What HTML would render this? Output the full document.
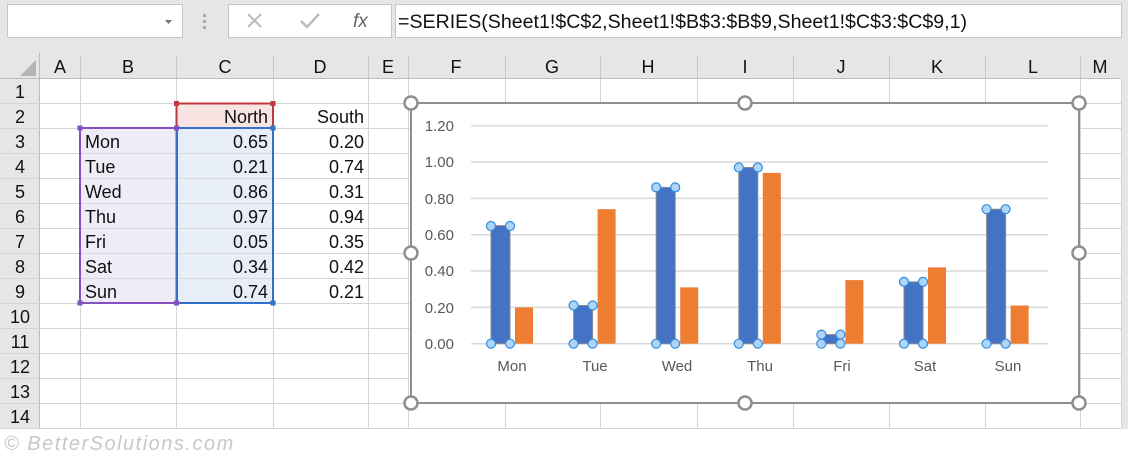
<!DOCTYPE html>
<html><head><meta charset="utf-8"><style>
html,body{margin:0;padding:0;background:#fff}
svg{display:block}
text{font-family:"Liberation Sans",sans-serif}
</style></head><body>
<svg width="1128" height="464" viewBox="0 0 1128 464" xmlns="http://www.w3.org/2000/svg">
<rect x="0" y="0" width="1128" height="79" fill="#e6e6e6"/>
<rect x="7.5" y="4.5" width="175" height="33" fill="#fff" stroke="#c6c6c6"/>
<path d="M165 20 h7 l-3.5 4z" fill="#777"/>
<rect x="203" y="14" width="3" height="3" fill="#aaa"/><rect x="203" y="20" width="3" height="3" fill="#aaa"/><rect x="203" y="26" width="3" height="3" fill="#aaa"/>
<rect x="228.5" y="4.5" width="163" height="33" fill="#fff" stroke="#c6c6c6"/>
<path d="M248 14 l13 13 M261 14 l-13 13" stroke="#bbb" stroke-width="2"/>
<path d="M301 21 l6 6 l12 -13" stroke="#bbb" stroke-width="2.5" fill="none"/>
<text x="353" y="27" font-family="Liberation Serif" font-style="italic" font-size="19" fill="#666">fx</text>
<rect x="395.5" y="4.5" width="726" height="33" fill="#fff" stroke="#c6c6c6"/>
<text x="398" y="28" font-size="19" fill="#111" textLength="569" lengthAdjust="spacingAndGlyphs">=SERIES(Sheet1!$C$2,Sheet1!$B$3:$B$9,Sheet1!$C$3:$C$9,1)</text>
<rect x="40" y="79" width="1081" height="350" fill="#fff"/>
<rect x="1121" y="53" width="7" height="376" fill="#e6e6e6"/>
<rect x="0" y="53" width="1121" height="26" fill="#e6e6e6"/>
<rect x="0" y="79" width="40" height="350" fill="#e6e6e6"/>
<line x1="0" y1="78.5" x2="1121" y2="78.5" stroke="#bdbdbd"/>
<line x1="39.5" y1="53" x2="39.5" y2="429" stroke="#bdbdbd"/>
<path d="M20 76 L36 76 L36 60z" fill="#b5b5b5"/>
<g stroke="#d4d4d4" stroke-width="1">
<path d="M0 103.5H1121M0 128.5H1121M0 153.5H1121M0 178.5H1121M0 203.5H1121M0 228.5H1121M0 253.5H1121M0 278.5H1121M0 303.5H1121M0 328.5H1121M0 353.5H1121M0 378.5H1121M0 403.5H1121M0 428.5H1121"/>
<path d="M80.5 79V429M176.5 79V429M273.5 79V429M368.5 79V429M408.5 79V429M505.5 79V429M600.5 79V429M697.5 79V429M793.5 79V429M889.5 79V429M985.5 79V429M1080.5 79V429M1121.5 79V429"/>
</g>
<g stroke="#c8c8c8"><path d="M80.5 56V79M176.5 56V79M273.5 56V79M368.5 56V79M408.5 56V79M505.5 56V79M600.5 56V79M697.5 56V79M793.5 56V79M889.5 56V79M985.5 56V79M1080.5 56V79"/></g>
<g font-size="18" fill="#111" text-anchor="middle">
<text x="60" y="73">A</text><text x="128" y="73">B</text><text x="225" y="73">C</text><text x="320" y="73">D</text><text x="388" y="73">E</text><text x="456" y="73">F</text><text x="552" y="73">G</text><text x="648" y="73">H</text><text x="745" y="73">I</text><text x="841" y="73">J</text><text x="937" y="73">K</text><text x="1033" y="73">L</text><text x="1100" y="73">M</text>
</g>
<g font-size="18" fill="#111" text-anchor="middle">
<text x="20" y="98">1</text><text x="20" y="123">2</text><text x="20" y="148">3</text><text x="20" y="173">4</text><text x="20" y="198">5</text><text x="20" y="223">6</text><text x="20" y="248">7</text><text x="20" y="273">8</text><text x="20" y="298">9</text><text x="20" y="323">10</text><text x="20" y="348">11</text><text x="20" y="373">12</text><text x="20" y="398">13</text><text x="20" y="423">14</text>
</g>
<rect x="177" y="104" width="96" height="24" fill="#f9e4e4"/>
<rect x="80" y="128" width="96" height="175" fill="#f0ecf7"/>
<rect x="177" y="128" width="96" height="175" fill="#e7eef8"/>
<g stroke="#d8d8d8"><path d="M81 153.5H176M81 178.5H176M81 203.5H176M81 228.5H176M81 253.5H176M81 278.5H176M178 153.5H272M178 178.5H272M178 203.5H272M178 228.5H272M178 253.5H272M178 278.5H272"/></g>
<rect x="176.5" y="103.5" width="96.5" height="24.5" fill="none" stroke="#c0393f" stroke-width="2"/>
<rect x="80" y="128" width="96.5" height="175" fill="none" stroke="#8152bd" stroke-width="2"/>
<rect x="177" y="128" width="96" height="175" fill="none" stroke="#3570c9" stroke-width="2"/>
<rect x="174" y="101" width="5" height="5" fill="#c0393f"/><rect x="270.5" y="101" width="5" height="5" fill="#c0393f"/>
<rect x="77.5" y="125.5" width="5" height="5" fill="#8152bd"/><rect x="174" y="125.5" width="5" height="5" fill="#8152bd"/>
<rect x="77.5" y="300.5" width="5" height="5" fill="#8152bd"/><rect x="174" y="300.5" width="5" height="5" fill="#8152bd"/>
<rect x="270.5" y="125.5" width="5" height="5" fill="#3570c9"/><rect x="270.5" y="300.5" width="5" height="5" fill="#3570c9"/>
<g font-size="18" fill="#111">
<text x="268" y="123" text-anchor="end">North</text><text x="364" y="123" text-anchor="end">South</text>
<text x="85" y="148">Mon</text><text x="85" y="173">Tue</text><text x="85" y="198">Wed</text><text x="85" y="223">Thu</text><text x="85" y="248">Fri</text><text x="85" y="273">Sat</text><text x="85" y="298">Sun</text>
<g text-anchor="end">
<text x="268" y="148">0.65</text><text x="268" y="173">0.21</text><text x="268" y="198">0.86</text><text x="268" y="223">0.97</text><text x="268" y="248">0.05</text><text x="268" y="273">0.34</text><text x="268" y="298">0.74</text>
<text x="364" y="148">0.20</text><text x="364" y="173">0.74</text><text x="364" y="198">0.31</text><text x="364" y="223">0.94</text><text x="364" y="248">0.35</text><text x="364" y="273">0.42</text><text x="364" y="298">0.21</text>
</g></g>
<rect x="411" y="103" width="668" height="300" fill="#fff" stroke="#8f8f8f" stroke-width="2"/>
<g stroke="#d9d9d9" stroke-width="1.5"><path d="M471 343.7H1048M471 307.4H1048M471 271H1048M471 234.7H1048M471 198.4H1048M471 162H1048M471 125.7H1048"/></g>
<g font-size="15" fill="#595959" text-anchor="end">
<text x="454" y="349">0.00</text><text x="454" y="313">0.20</text><text x="454" y="276">0.40</text><text x="454" y="240">0.60</text><text x="454" y="204">0.80</text><text x="454" y="167">1.00</text><text x="454" y="131">1.20</text>
</g>
<g fill="#ed7d31">
<rect x="515" y="307.4" width="18" height="36.3"/><rect x="597.6" y="209.2" width="18" height="134.5"/><rect x="680.2" y="287.4" width="18" height="56.3"/><rect x="762.8" y="172.9" width="18" height="170.8"/><rect x="845.4" y="280.1" width="18" height="63.6"/><rect x="928" y="267.4" width="18" height="76.3"/><rect x="1010.6" y="305.5" width="18" height="38.2"/>
</g>
<g fill="#4472c4" stroke="#8a8a8a" stroke-width="1">
<rect x="491" y="225.6" width="19" height="118.1"/><rect x="573.6" y="305.5" width="19" height="38.2"/><rect x="656.2" y="187.4" width="19" height="156.3"/><rect x="738.8" y="167.5" width="19" height="176.2"/><rect x="821.4" y="334.6" width="19" height="9.1"/><rect x="904" y="281.9" width="19" height="61.8"/><rect x="986.6" y="209.2" width="19" height="134.5"/>
</g>
<g fill="#b0d4f5" stroke="#2f8de0" stroke-width="1.2">
<circle cx="491" cy="226" r="4.5"/><circle cx="510" cy="226" r="4.5"/><circle cx="491" cy="343.7" r="4.5"/><circle cx="510" cy="343.7" r="4.5"/>
<circle cx="573.6" cy="305.5" r="4.5"/><circle cx="592.6" cy="305.5" r="4.5"/><circle cx="573.6" cy="343.7" r="4.5"/><circle cx="592.6" cy="343.7" r="4.5"/>
<circle cx="656.2" cy="187.4" r="4.5"/><circle cx="675.2" cy="187.4" r="4.5"/><circle cx="656.2" cy="343.7" r="4.5"/><circle cx="675.2" cy="343.7" r="4.5"/>
<circle cx="738.8" cy="167.5" r="4.5"/><circle cx="757.8" cy="167.5" r="4.5"/><circle cx="738.8" cy="343.7" r="4.5"/><circle cx="757.8" cy="343.7" r="4.5"/>
<circle cx="821.4" cy="334.6" r="4.5"/><circle cx="840.4" cy="334.6" r="4.5"/><circle cx="821.4" cy="343.7" r="4.5"/><circle cx="840.4" cy="343.7" r="4.5"/>
<circle cx="904" cy="281.9" r="4.5"/><circle cx="923" cy="281.9" r="4.5"/><circle cx="904" cy="343.7" r="4.5"/><circle cx="923" cy="343.7" r="4.5"/>
<circle cx="986.6" cy="209.2" r="4.5"/><circle cx="1005.6" cy="209.2" r="4.5"/><circle cx="986.6" cy="343.7" r="4.5"/><circle cx="1005.6" cy="343.7" r="4.5"/>
</g>
<g font-size="15" fill="#595959" text-anchor="middle">
<text x="512" y="371">Mon</text><text x="595" y="371">Tue</text><text x="677" y="371">Wed</text><text x="760" y="371">Thu</text><text x="842" y="371">Fri</text><text x="925" y="371">Sat</text><text x="1008" y="371">Sun</text>
</g>
<g fill="#fff" stroke="#8f8f8f" stroke-width="2.5">
<circle cx="411" cy="103" r="6.5"/><circle cx="745" cy="103" r="6.5"/><circle cx="1079" cy="103" r="6.5"/>
<circle cx="411" cy="253" r="6.5"/><circle cx="1079" cy="253" r="6.5"/>
<circle cx="411" cy="403" r="6.5"/><circle cx="745" cy="403" r="6.5"/><circle cx="1079" cy="403" r="6.5"/>
</g>
<text x="4" y="450" font-size="20" font-style="italic" fill="#c8c8c8" letter-spacing="1.5">© BetterSolutions.com</text>
</svg>
</body></html>
